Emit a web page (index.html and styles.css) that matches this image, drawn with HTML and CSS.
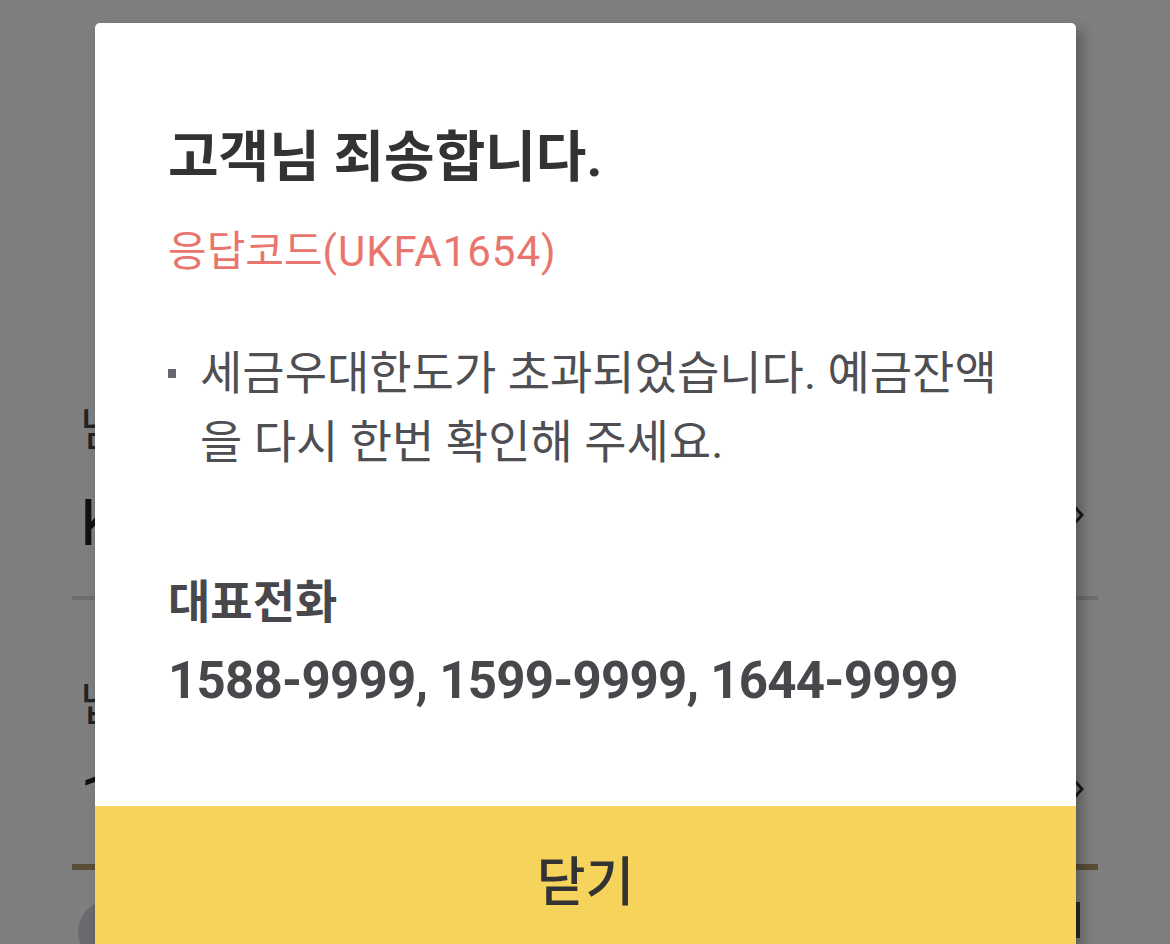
FILE: index.html
```html
<!DOCTYPE html>
<html lang="ko">
<head>
<meta charset="utf-8">
<title>고객님 죄송합니다.</title>
<link rel="stylesheet" href="styles.css">
</head>
<body>
<div class="page">
  <div class="label">남은</div>
  <div class="value-row">
    <span class="value">KB</span>
    <svg class="chev" width="14" height="26" viewBox="0 0 14 26"><path d="M2 2 L12 13 L2 24" fill="none" stroke="#333" stroke-width="3"/></svg>
  </div>
  <div class="rule gray"></div>
  <div class="label label2">납입</div>
  <div class="value-row">
    <span class="value">1</span>
    <svg class="chev chev2" width="14" height="26" viewBox="0 0 14 26"><path d="M2 2 L12 13 L2 24" fill="none" stroke="#333" stroke-width="3"/></svg>
  </div>
  <div class="rule gold"></div>
  <div class="bottom-row">
    <span class="circle"></span>
    <span class="bar"></span>
  </div>
</div>
<div class="overlay"></div>
<div class="dialog">
  <div class="content">
    <h1 class="title">고객님 죄송합니다.</h1>
    <p class="code">응답코드<span class="code-latin">(UKFA1654)</span></p>
    <ul class="msg">
      <li>세금우대한도가 초과되었습니다. 예금잔액을 다시 한번 확인해 주세요.</li>
    </ul>
    <h2 class="tel-title">대표전화</h2>
    <p class="tel">1588-9999, 1599-9999, 1644-9999</p>
  </div>
  <button class="close">닫기</button>
</div>
</body>
</html>
```

FILE: styles.css
```css
* { box-sizing: border-box; }
html, body { margin: 0; padding: 0; }
body {
  width: 1170px;
  height: 944px;
  overflow: hidden;
  background: #fff;
  font-family: Roboto, "Noto Sans CJK KR", sans-serif;
  position: relative;
}
.page {
  padding: 404px 72px 0 72px;
  display: flex;
  flex-direction: column;
}
.label {
  font-size: 46px;
  line-height: 50px;
  color: #444;
  padding-left: 8px;
}
.label2 { margin-top: 79px; }
.value-row {
  display: flex;
  justify-content: space-between;
  align-items: flex-start;
  margin-top: 35px;
  padding-left: 8px;
  padding-right: 14px;
}
.value {
  font-size: 64px;
  line-height: 70px;
  color: #222;
}
.chev { margin-top: 13px; }
.chev2 { margin-top: 12px; }
.rule { height: 4px; margin-top: 37px; }
.rule.gray { background: #dcdcdc; }
.rule.gold { background: #b49c70; height: 6px; margin-top: 30px; }
.bottom-row {
  display: flex;
  justify-content: space-between;
  align-items: flex-start;
  margin-top: 30px;
  padding-left: 6px;
  padding-right: 18px;
}
.circle {
  width: 64px; height: 64px; border-radius: 50%;
  background: #d4d6dc;
}
.bar { width: 4px; height: 36px; background: #555; margin-top: 2px; }

.overlay {
  position: absolute; inset: 0;
  background: rgba(0,0,0,0.5);
}
.dialog {
  position: absolute;
  top: 23px;
  left: 95px;
  width: 981px;
  background: #fff;
  border-radius: 5px 5px 0 0;
  box-shadow: 6px 6px 14px rgba(0,0,0,0.3);
  overflow: hidden;
}
.content {
  padding: 104px 73px 95px 73px;
}
.title {
  margin: 0;
  font-size: 55px;
  line-height: 60px;
  font-weight: 700;
  color: #333336;
}
.code {
  margin: 40px 0 0 0;
  font-size: 42px;
  line-height: 50px;
  color: #e8766e;
}
.code-latin { letter-spacing: 1px; }
.msg {
  list-style: none;
  margin: 62px 0 0 0;
  padding: 0 0 0 32px;
  font-size: 46px;
  line-height: 69px;
  color: #4e4e53;
}
.msg li { position: relative; }
.msg li::before {
  content: "";
  position: absolute;
  left: -32px;
  top: 30px;
  width: 8px;
  height: 9px;
  background: #666870;
}
.tel-title {
  margin: 100px 0 0 0;
  font-size: 46px;
  line-height: 50px;
  font-weight: 700;
  color: #48484c;
}
.tel {
  margin: 24px 0 0 0;
  font-size: 51px;
  line-height: 60px;
  font-weight: 700;
  letter-spacing: -0.75px;
  color: #48484c;
}
.close {
  display: block;
  width: 100%;
  height: 154px;
  border: 0;
  margin: 0;
  padding: 0;
  background: #f6d35b;
  font-family: Roboto, "Noto Sans CJK KR", sans-serif;
  font-size: 53px;
  font-weight: 500;
  color: #333;
  line-height: 154px;
}
```
